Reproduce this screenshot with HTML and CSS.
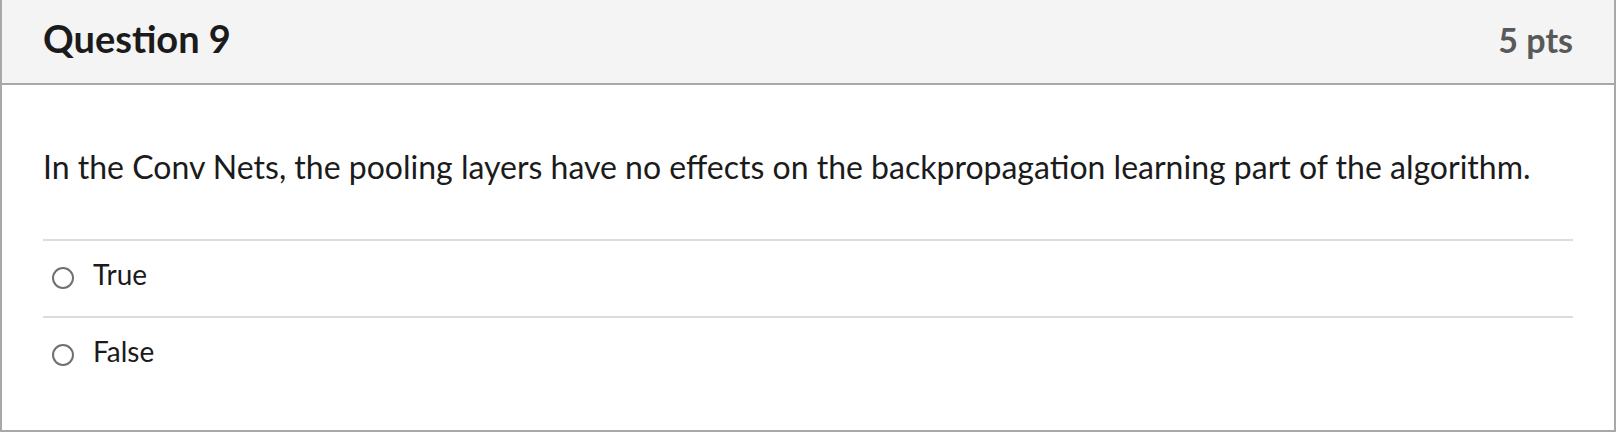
FILE: index.html
```html
<!DOCTYPE html>
<html>
<head>
<meta charset="utf-8">
<link rel="stylesheet" href="styles.css">
</head>
<body>
<div class="card">
  <div class="header">
    <div class="title">Question 9</div>
    <div class="pts">5 pts</div>
  </div>
  <div class="content">
    <p class="question">In the Conv Nets, the pooling layers have no effects on the backpropagation learning part of the algorithm.</p>
    <div class="answers">
      <label class="answer"><span class="radio"></span><span class="label">True</span></label>
      <label class="answer"><span class="radio"></span><span class="label">False</span></label>
    </div>
  </div>
</div>
</body>
</html>
```

FILE: styles.css
```css
html, body {
  margin: 0;
  padding: 0;
  background: #ffffff;
}
body {
  font-family: Lato, "Open Sans", sans-serif;
  color: #1b1b1b;
}
.card {
  width: 1612px;
  height: 430px;
  border: 2px solid #a8a8a8;
  border-top: none;
  box-sizing: content-box;
  background: #fff;
}
.header {
  height: 83px;
  box-sizing: border-box;
  background: #f4f4f4;
  border-bottom: 2px solid #a8a8a8;
  display: flex;
  align-items: baseline;
  justify-content: space-between;
  padding: 15px 41px 0 41px;
  height: 85px;
}
.title {
  font-size: 38px;
  font-weight: 700;
  color: #1b1b1b;
}
.pts {
  font-size: 34px;
  font-weight: 700;
  color: #595959;
}
.content {
  padding: 0 41px;
}
.question {
  margin: 0;
  padding-top: 60px;
  padding-bottom: 50px;
  font-size: 32px;
  line-height: 44px;
}
.answers {
  border-top: 2px solid #dcdcdc;
}
.answer {
  display: flex;
  align-items: flex-start;
  height: 75px;
  box-sizing: border-box;
  border-bottom: 2px solid #dcdcdc;
  padding: 16px 0 0 9px;
  height: 77px;
}
.answer:last-child {
  border-bottom: none;
}
.radio {
  width: 18px;
  height: 18px;
  margin-top: 10px;
  margin-right: 19px;
  border: 2px solid #707070;
  border-radius: 50%;
  box-sizing: content-box;
  flex: none;
}
.label {
  font-size: 28px;
  line-height: 34px;
}
```
